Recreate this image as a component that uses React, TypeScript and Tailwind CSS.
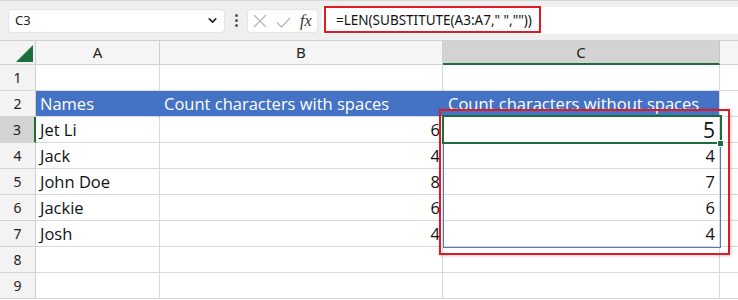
import React from 'react';
import { ChevronDown } from 'lucide-react';

const rows = [
  { n: 1, a: '', b: '', c: '' },
  { n: 2, a: 'Names', b: 'Count characters with spaces', c: 'Count characters without spaces', head: true },
  { n: 3, a: 'Jet Li', b: '6', c: '5' },
  { n: 4, a: 'Jack', b: '4', c: '4' },
  { n: 5, a: 'John Doe', b: '8', c: '7' },
  { n: 6, a: 'Jackie', b: '6', c: '6' },
  { n: 7, a: 'Josh', b: '4', c: '4' },
  { n: 8, a: '', b: '', c: '' },
  { n: 9, a: '', b: '', c: '' },
];

const cellFont = { fontFamily: '"Open Sans", "Noto Sans", sans-serif' };
const uiFont = { fontFamily: '"Noto Sans", "Open Sans", sans-serif' };

const App: React.FC = () => {
  return (
    <div className="w-[738px] h-[300px] overflow-hidden bg-white">
      {/* toolbar */}
      <div className="h-[40px] bg-[#efefef] border-t border-[#d6d6d6] flex items-center pl-[8px]" style={uiFont}>
        <div className="w-[217px] h-[24px] bg-white rounded-[4px] border border-[#e4e4e4] flex items-center justify-between pl-[6px] pr-[5px]">
          <span className="text-[13px] text-[#222]">C3</span>
          <ChevronDown className="w-[13px] h-[13px] text-[#222]" strokeWidth={3} />
        </div>
        <div className="w-[22px] flex flex-col items-center gap-[2px]">
          <span className="w-[3px] h-[3px] rounded-full bg-[#555]" />
          <span className="w-[3px] h-[3px] rounded-full bg-[#555]" />
          <span className="w-[3px] h-[3px] rounded-full bg-[#555]" />
        </div>
        <div className="w-[71px] h-[24px] bg-white rounded-[4px] border border-[#e4e4e4] flex items-center pl-[5px]">
          <svg width="14" height="14" viewBox="0 0 14 14" className="mr-[9px]">
            <path d="M1 1 L13 13 M13 1 L1 13" stroke="#b8b8b8" strokeWidth="1.3" fill="none" />
          </svg>
          <svg width="15" height="11" viewBox="0 0 15 11" className="mr-[9px] mt-[3px]">
            <path d="M1 5.5 L5.5 10 L14 1" stroke="#b8b8b8" strokeWidth="1.3" fill="none" />
          </svg>
          <span className="text-[16px] italic text-[#333] leading-none" style={{ fontFamily: '"Liberation Serif", serif' }}>fx</span>
        </div>
        <div className="relative ml-[4px] flex-1 h-[27px] bg-white flex items-center pl-[14px]">
          <span className="text-[13.5px] text-[#111]">=LEN(SUBSTITUTE(A3:A7," ",""))</span>
          <div className="absolute left-[2px] top-[-1px] w-[217px] h-[27px] border-[2.5px] border-[#e01a22]" />
        </div>
      </div>

      {/* grid */}
      <div className="relative">
        <div className="grid grid-cols-[36px_124px_283px_277px_1fr] border-t border-[#cfcfcf]">
          {/* column headers */}
          <div className="h-[24px] bg-[#f3f3f3] border-r border-b border-[#cfcfcf] relative">
            <svg width="17" height="17" viewBox="0 0 17 17" className="absolute left-[16px] top-[4px]">
              <polygon points="0,17 17,0 17,17" fill="#1e6e3d" />
            </svg>
          </div>
          {['A', 'B'].map((c) => (
            <div key={c} className="h-[24px] bg-[#f5f5f5] border-r border-b border-[#cfcfcf] flex items-center justify-center text-[15px] text-[#222]" style={uiFont}>
              {c}
            </div>
          ))}
          <div className="h-[24px] bg-[#d3d3d3] border-r border-b-2 border-r-[#c4c4c4] border-b-[#1e6e3d] flex items-center justify-center text-[15px] text-[#222]" style={uiFont}>
            C
          </div>
          <div className="h-[24px] bg-[#f5f5f5] border-b border-[#cfcfcf]" />

          {rows.map((r) => (
            <React.Fragment key={r.n}>
              <div
                className={`h-[26px] border-b border-[#d4d4d4] flex items-center justify-center text-[14px] text-[#222] ${
                  r.n === 3 ? 'bg-[#d3d3d3] border-r-2 border-r-[#1e6e3d]' : 'bg-[#f3f3f3] border-r border-r-[#cfcfcf]'
                }`}
                style={uiFont}
              >
                {r.n}
              </div>
              <div
                className={`h-[26px] border-b border-r border-[#d9d9d9] pl-[4px] text-[16.5px] leading-[26px] whitespace-nowrap ${
                  r.head ? 'bg-[#4472c4] text-white border-r-[#4472c4] border-b-[#d9d9d9]' : 'text-[#111]'
                }`}
                style={cellFont}
              >
                {r.a}
              </div>
              <div
                className={`h-[26px] border-b border-r border-[#d9d9d9] text-[16.5px] leading-[26px] whitespace-nowrap ${
                  r.head ? 'bg-[#4472c4] text-white border-r-[#4472c4] pl-[4px]' : 'text-[#111] text-right pr-[2px]'
                }`}
                style={cellFont}
              >
                {r.b}
              </div>
              <div
                className={`h-[26px] border-b border-r border-[#d9d9d9] leading-[26px] whitespace-nowrap ${
                  r.head ? 'bg-[#4472c4] text-white pl-[5px]' : 'text-[#111] text-right pr-[4px]'
                } ${r.n === 3 ? 'text-[21px]' : 'text-[16.5px]'}`}
                style={cellFont}
              >
                {r.c}
              </div>
              <div className="h-[26px] border-b border-[#d9d9d9]" />
            </React.Fragment>
          ))}
        </div>

        {/* range outline */}
        <div className="absolute left-[443px] top-[103px] w-[278px] h-[105px] border border-[#4f79c4]" />
        {/* active cell */}
        <div className="absolute left-[442px] top-[75px] w-[280px] h-[29px] border-2 border-[#1e6e3d]" />
        <div className="absolute left-[717px] top-[100px] w-[7px] h-[7px] bg-[#1e6e3d] border border-white" />
        {/* callout */}
        <div className="absolute left-[439px] top-[69px] w-[291px] h-[146px] border-[2.5px] border-[#e01a22] shadow-[1px_1px_3px_rgba(0,0,0,0.2)]" />
      </div>
    </div>
  );
};

export default App;
